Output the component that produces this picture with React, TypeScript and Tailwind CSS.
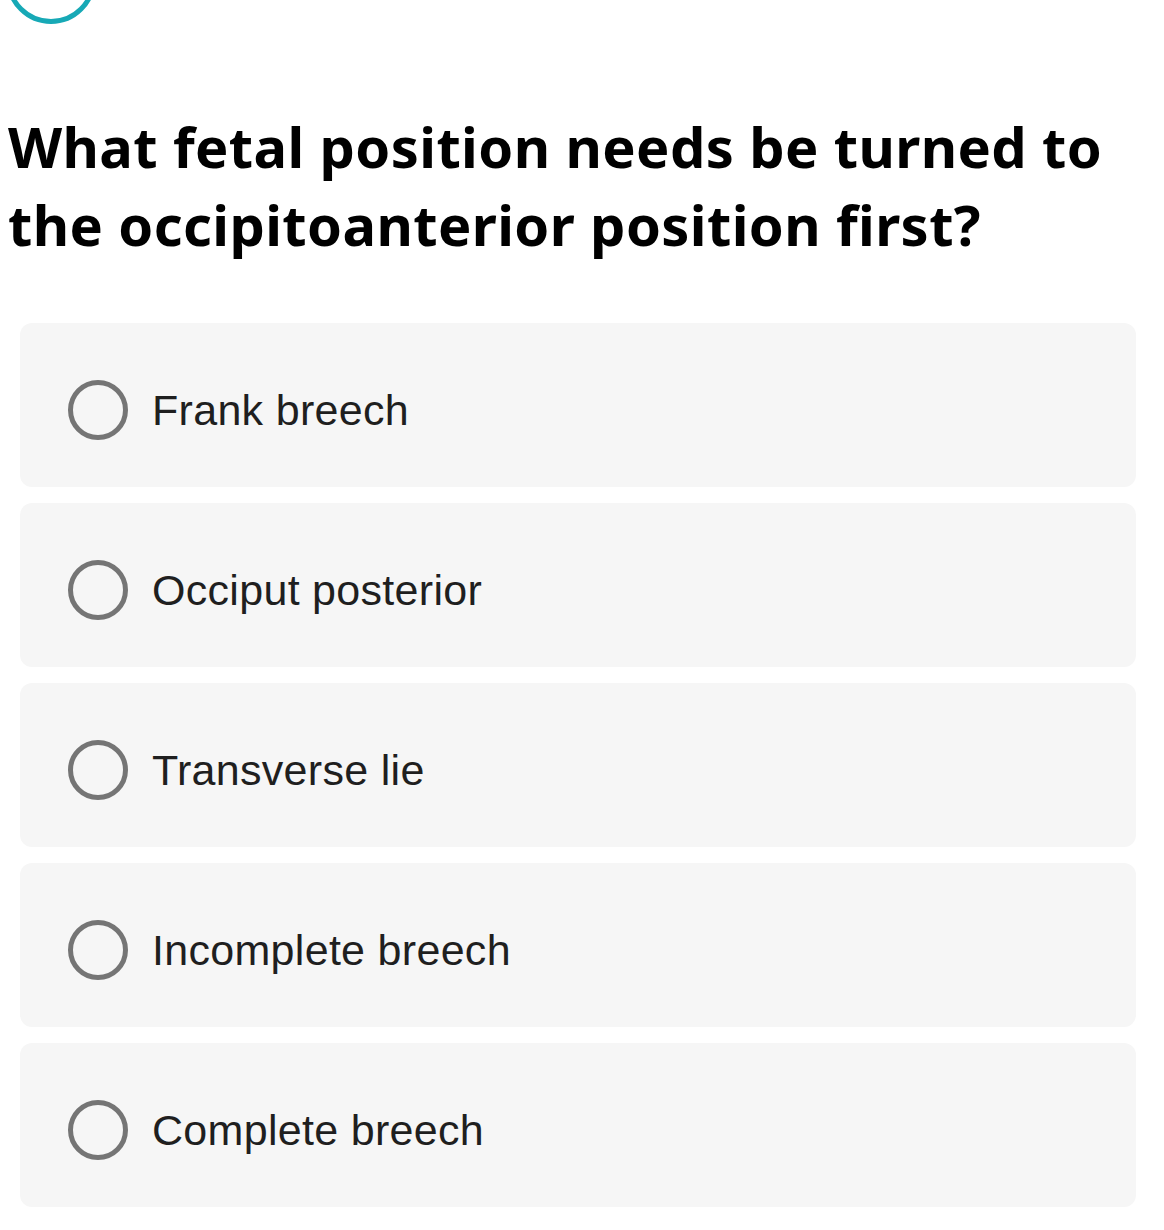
import React from 'react';

const OPTIONS = [
  'Frank breech',
  'Occiput posterior',
  'Transverse lie',
  'Incomplete breech',
  'Complete breech',
];

const Option: React.FC<{ label: string }> = ({ label }) => (
  <div className="h-[164px] rounded-[12px] bg-[#f6f6f6] flex items-center pl-[48px] pt-[10px]">
    <div className="w-[60px] h-[60px] rounded-full border-[5px] border-[#757575] shrink-0" />
    <span className="ml-[24px] text-[43px] tracking-[0.3px] text-[#1f1f1f] font-['Liberation_Sans',Arial,sans-serif]">
      {label}
    </span>
  </div>
);

export default function App() {
  return (
    <div className="relative w-[1164px] h-[1230px] bg-white overflow-hidden">
      <div className="absolute left-[6px] top-[-66px] w-[90px] h-[90px] rounded-full border-[5px] border-[#17a9b6]" />
      <div className="pt-[107px] px-[8px]">
        <h1 className="text-[56px] leading-[78px] font-bold text-black tracking-[0.4px] font-['Noto_Sans',sans-serif]">
          What fetal position needs be turned to
          <br />
          the occipitoanterior position first?
        </h1>
      </div>
      <div className="mt-[60px] px-[20px] flex flex-col gap-[16px] w-[1156px]">
        {OPTIONS.map((o) => (
          <Option key={o} label={o} />
        ))}
      </div>
    </div>
  );
}
